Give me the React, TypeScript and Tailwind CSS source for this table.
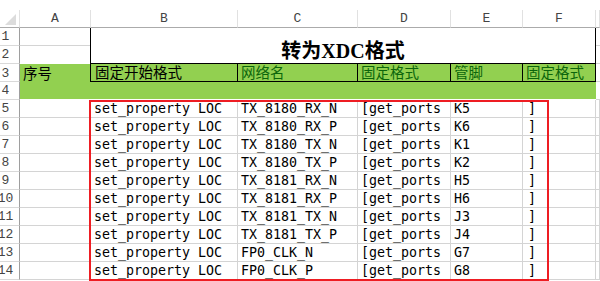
import React from 'react';

const mono = { fontFamily: '"DejaVu Sans Mono", monospace' };

const rows = [
  ['TX_8180_RX_N', 'K5'],
  ['TX_8180_RX_P', 'K6'],
  ['TX_8180_TX_N', 'K1'],
  ['TX_8180_TX_P', 'K2'],
  ['TX_8181_RX_N', 'H5'],
  ['TX_8181_RX_P', 'H6'],
  ['TX_8181_TX_N', 'J3'],
  ['TX_8181_TX_P', 'J4'],
  ['FP0_CLK_N', 'G7'],
  ['FP0_CLK_P', 'G8'],
];

const RowNum = ({ n }: { n: number }) => (
  <div className="flex w-[20px] shrink-0 overflow-hidden border-r border-b border-r-[#9e9e9e] border-b-[#d9d9d9] font-['Liberation_Mono',monospace] text-[13px] text-[#444]">
    <div className="flex w-[11px] shrink-0 items-center justify-center pt-[1px]">{n}</div>
  </div>
);

const ColHead = ({ w, label }: { w: string; label?: string }) => (
  <div className={`${w} flex shrink-0 items-center justify-center border-r border-b border-r-[#e1e1e1] border-b-[#ababab] font-['Liberation_Mono',monospace] text-[13px] text-[#444]`}>
    {label}
  </div>
);

const Cell = ({ w, children }: { w: string; children?: React.ReactNode }) => (
  <div className={`${w} flex shrink-0 items-center overflow-hidden whitespace-nowrap border-r border-b border-[#d4d4d4] pl-[3px] pt-[1px] text-[13.3px] text-black`} style={mono}>
    {children}
  </div>
);

export default function App() {
  return (
    <div className="relative h-[281px] w-[600px] overflow-hidden bg-white">
      <div className="h-[10px]" />

      <div className="flex h-[18px]">
        <div className="flex w-[20px] shrink-0 items-end justify-end border-r border-b border-r-[#e1e1e1] border-b-[#ababab] pb-[2px] pr-[3px]">
          <svg width="11" height="11" viewBox="0 0 11 11">
            <polygon points="11,0 11,11 0,11" fill="#dcdcdc" />
          </svg>
        </div>
        <ColHead w="w-[71px]" label="A" />
        <ColHead w="w-[147px]" label="B" />
        <ColHead w="w-[120px]" label="C" />
        <ColHead w="w-[93px]" label="D" />
        <ColHead w="w-[72px]" label="E" />
        <ColHead w="w-[73px]" label="F" />
        <ColHead w="w-[4px]" />
      </div>

      <div className="flex h-[36px]">
        <div className="flex w-[20px] shrink-0 flex-col">
          <div className="flex h-[18px]"><RowNum n={1} /></div>
          <div className="flex h-[18px]"><RowNum n={2} /></div>
        </div>
        <div className="flex w-[71px] shrink-0 flex-col border-r border-black">
          <div className="h-[18px] border-b border-[#d4d4d4]" />
          <div className="h-[18px]" />
        </div>
        <div className="flex w-[505px] shrink-0 items-end justify-center border-r border-b border-black pb-[2px] font-['Liberation_Serif','Noto_Sans_CJK_SC',serif] text-[20px] font-bold leading-none text-black">
          转为XDC格式
        </div>
        <div className="flex w-[4px] shrink-0 flex-col">
          <div className="h-[18px] border-b border-[#d4d4d4]" />
          <div className="h-[18px] border-b border-[#d4d4d4]" />
        </div>
      </div>

      <div className="flex h-[18px] font-['Noto_Sans_CJK_SC',sans-serif] text-[14.5px] leading-none">
        <RowNum n={3} />
        <div className="flex w-[71px] shrink-0 items-center border-r border-black bg-[#92d050] pl-[3px] text-black">序号</div>
        <div className="flex w-[147px] shrink-0 items-center border-r border-b border-black bg-[#92d050] pl-[4px] text-black">固定开始格式</div>
        <div className="flex w-[120px] shrink-0 items-center border-r border-b border-black bg-[#92d050] pl-[3px] text-[#0b650b]">网络名</div>
        <div className="flex w-[93px] shrink-0 items-center border-r border-b border-black bg-[#92d050] pl-[3px] text-[#0b650b]">固定格式</div>
        <div className="flex w-[72px] shrink-0 items-center border-r border-b border-black bg-[#92d050] pl-[3px] text-[#0b650b]">管脚</div>
        <div className="flex w-[73px] shrink-0 items-center border-r border-b border-black bg-[#92d050] pl-[3px] text-[#0b650b]">固定格式</div>
        <div className="w-[4px] shrink-0 border-b border-[#d4d4d4]" />
      </div>

      <div className="flex h-[18px]">
        <RowNum n={4} />
        <div className="w-[576px] shrink-0 border-b border-white bg-[#92d050]" />
        <div className="w-[4px] shrink-0 border-b border-[#d4d4d4]" />
      </div>

      {rows.map(([net, pin], i) => (
        <div key={net} className="flex h-[18px]">
          <RowNum n={i + 5} />
          <Cell w="w-[71px]" />
          <Cell w="w-[147px]">set_property LOC</Cell>
          <Cell w="w-[120px]">{net}</Cell>
          <Cell w="w-[93px]">[get_ports</Cell>
          <Cell w="w-[72px]">{pin}</Cell>
          <Cell w="w-[73px]"><span className="pl-[2px]">]</span></Cell>
          <Cell w="w-[4px]" />
        </div>
      ))}

      <div className="pointer-events-none absolute left-[89px] top-[100px] h-[181px] w-[460px] border-2 border-[#ee1d23]" />
    </div>
  );
}
